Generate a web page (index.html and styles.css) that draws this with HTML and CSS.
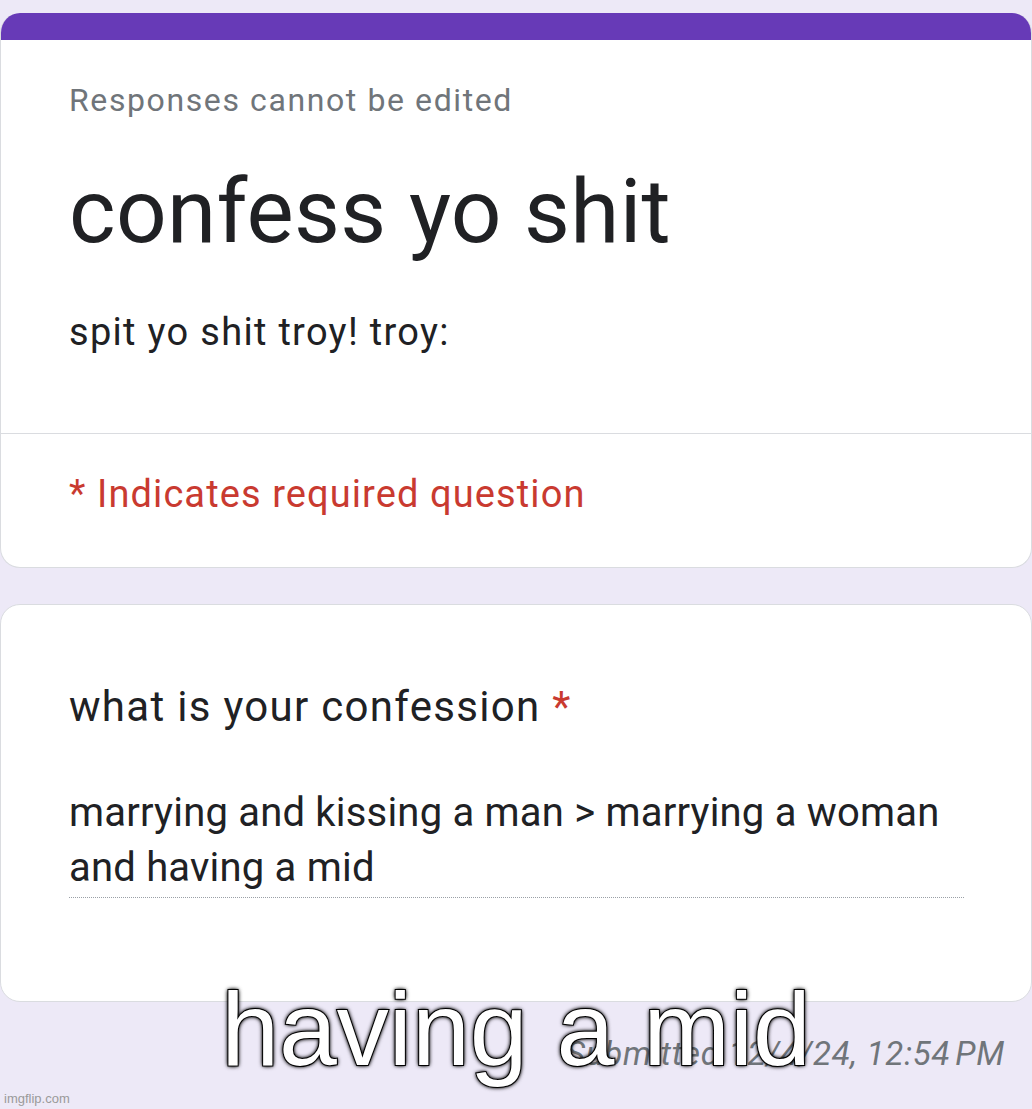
FILE: index.html
```html
<!DOCTYPE html>
<html lang="en">
<head>
<meta charset="utf-8">
<title>confess yo shit</title>
<link rel="stylesheet" href="styles.css">
</head>
<body>
<main class="page">
  <section class="card header-card">
    <div class="accent"></div>
    <div class="header-body">
      <p class="note">Responses cannot be edited</p>
      <h1 class="title">confess yo shit</h1>
      <p class="desc">spit yo shit troy! troy:</p>
    </div>
    <div class="required-row">
      <p class="required">* Indicates required question</p>
    </div>
  </section>

  <section class="card question-card">
    <h2 class="question">what is your confession <span class="star">*</span></h2>
    <div class="answer">marrying and kissing a man &gt; marrying a woman and having a mid</div>
  </section>

  <p class="submitted">Submitted 12/4/24, 12:54&#8239;PM</p>
</main>
<div class="caption">having a mid</div>
<div class="watermark">imgflip.com</div>
</body>
</html>
```
FILE: styles.css
```css
* { box-sizing: border-box; }
html, body { margin: 0; padding: 0; }
body {
  background: #ede9f7;
  font-family: Roboto, "Noto Sans", Arial, sans-serif;
  color: #202124;
  width: 1032px;
  height: 1109px;
  position: relative;
  overflow: hidden;
}
.page {
  display: flex;
  flex-direction: column;
  padding-top: 13px;
}
p, h1, h2 { margin: 0; font-weight: 400; }

.card {
  background: #fff;
  border: 1px solid #dadce0;
  border-radius: 20px;
  overflow: hidden;
}
.header-card { border-top: none; }
.accent {
  height: 27px;
  background: #673ab7;
}
.header-body {
  padding: 40px 67px 77px 68px;
  border-bottom: 1.5px solid #dadce0;
}
.note {
  font-size: 32px;
  line-height: 40px;
  letter-spacing: 1.6px;
  color: #70757a;
}
.title {
  margin-top: 40px;
  font-size: 89px;
  line-height: 104px;
  letter-spacing: 0.3px;
  color: #202124;
}
.desc {
  margin-top: 44px;
  font-size: 38px;
  line-height: 48px;
  letter-spacing: 1.3px;
  color: #202124;
}
.required-row {
  padding: 36px 67px 49px 68px;
}
.required {
  font-size: 38px;
  line-height: 48px;
  letter-spacing: 1.1px;
  color: #c93a30;
}

.question-card {
  margin-top: 36px;
  padding: 77px 67px 103px 68px;
}
.question {
  font-size: 42px;
  line-height: 50px;
  letter-spacing: 1.3px;
  color: #202124;
}
.star { color: #c93a30; }
.answer {
  margin-top: 53px;
  font-size: 40px;
  line-height: 55px;
  letter-spacing: 0.2px;
  color: #202124;
  padding-bottom: 2px;
  border-bottom: 1.5px dotted #9aa0a6;
}

.submitted {
  margin-top: 32px;
  padding-right: 27px;
  text-align: right;
  font-size: 33px;
  line-height: 40px;
  letter-spacing: 0.8px;
  font-style: italic;
  color: #70757a;
}

.caption {
  position: absolute;
  left: 0;
  right: 0;
  top: 977px;
  text-align: center;
  font-family: "Liberation Sans", Arial, sans-serif;
  font-size: 104px;
  line-height: 104px;
  color: #fff;
  -webkit-text-stroke: 2px #000;
  paint-order: stroke fill;
  text-shadow: 0 0 3px #000, 0 0 4px #000, 0 0 5px rgba(0,0,0,.8);
}
.watermark {
  position: absolute;
  left: 4px;
  bottom: 1px;
  font-family: "Liberation Sans", Arial, sans-serif;
  font-size: 13px;
  line-height: 18px;
  color: #9a9a9a;
}
```
